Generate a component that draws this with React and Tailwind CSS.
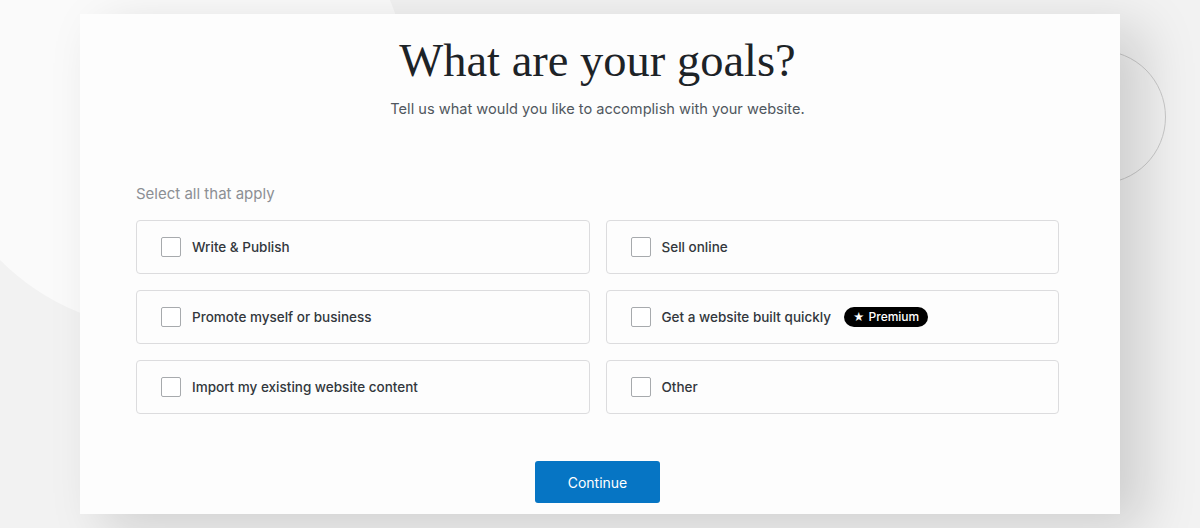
import React from "react";

const goals = [
  { label: "Write & Publish" },
  { label: "Sell online" },
  { label: "Promote myself or business" },
  { label: "Get a website built quickly", premium: true },
  { label: "Import my existing website content" },
  { label: "Other" },
];

function Option({ label, premium }) {
  return (
    <label className="flex h-[54px] items-center rounded-[4px] border border-[#dcdcde] bg-[#fdfdfd] pl-[24px]">
      <span className="h-[20px] w-[20px] rounded-[2px] border border-[#a7aaad] bg-white" />
      <span className="ml-[11px] text-[13.5px] font-medium text-[#32373c]">{label}</span>
      {premium && (
        <span className="ml-[13px] flex h-[20px] items-center rounded-full bg-black px-[9px] text-[12px] font-medium text-white">
          <span className="mr-[4px] text-[11px]">★</span>Premium
        </span>
      )}
    </label>
  );
}

export default function App() {
  return (
    <div
      className="relative h-[528px] w-[1200px] overflow-hidden bg-[#f2f2f2]"
      style={{ fontFamily: "Inter, 'Liberation Sans', sans-serif" }}
    >
      <div className="absolute left-[-70px] top-[-148px] h-[478px] w-[478px] rounded-full bg-[#fafafa]" />
      <div className="absolute left-[1032px] top-[50px] h-[134px] w-[134px] rounded-full border border-[#c9c9c9]" />
      <div className="relative ml-[80px] mt-[14px] flex h-[500px] w-[1040px] flex-col items-center bg-[#fdfdfd] pl-[56px] pr-[61px] shadow-[24px_14px_50px_rgba(0,0,0,0.15)]">
        <h1
          className="mt-[18px] text-[46.5px] leading-[58px] text-[#1d2327]"
          style={{ fontFamily: "'Liberation Serif', 'DejaVu Serif', serif" }}
        >
          What are your goals?
        </h1>
        <p className="mt-[7px] text-[14.6px] leading-[24px] text-[#50575e]">
          Tell us what would you like to accomplish with your website.
        </p>
        <div className="mt-[61px] w-full text-[15px] leading-[24px] text-[#8c8f94]">Select all that apply</div>
        <div className="mt-[14px] grid w-full grid-cols-2 gap-x-[16px] gap-y-[16px]">
          {goals.map((g) => (
            <Option key={g.label} {...g} />
          ))}
        </div>
        <button className="mt-[47px] flex h-[42px] w-[125px] items-center justify-center rounded-[3px] bg-[#0675c4] text-[14px] text-white">
          Continue
        </button>
      </div>
    </div>
  );
}
